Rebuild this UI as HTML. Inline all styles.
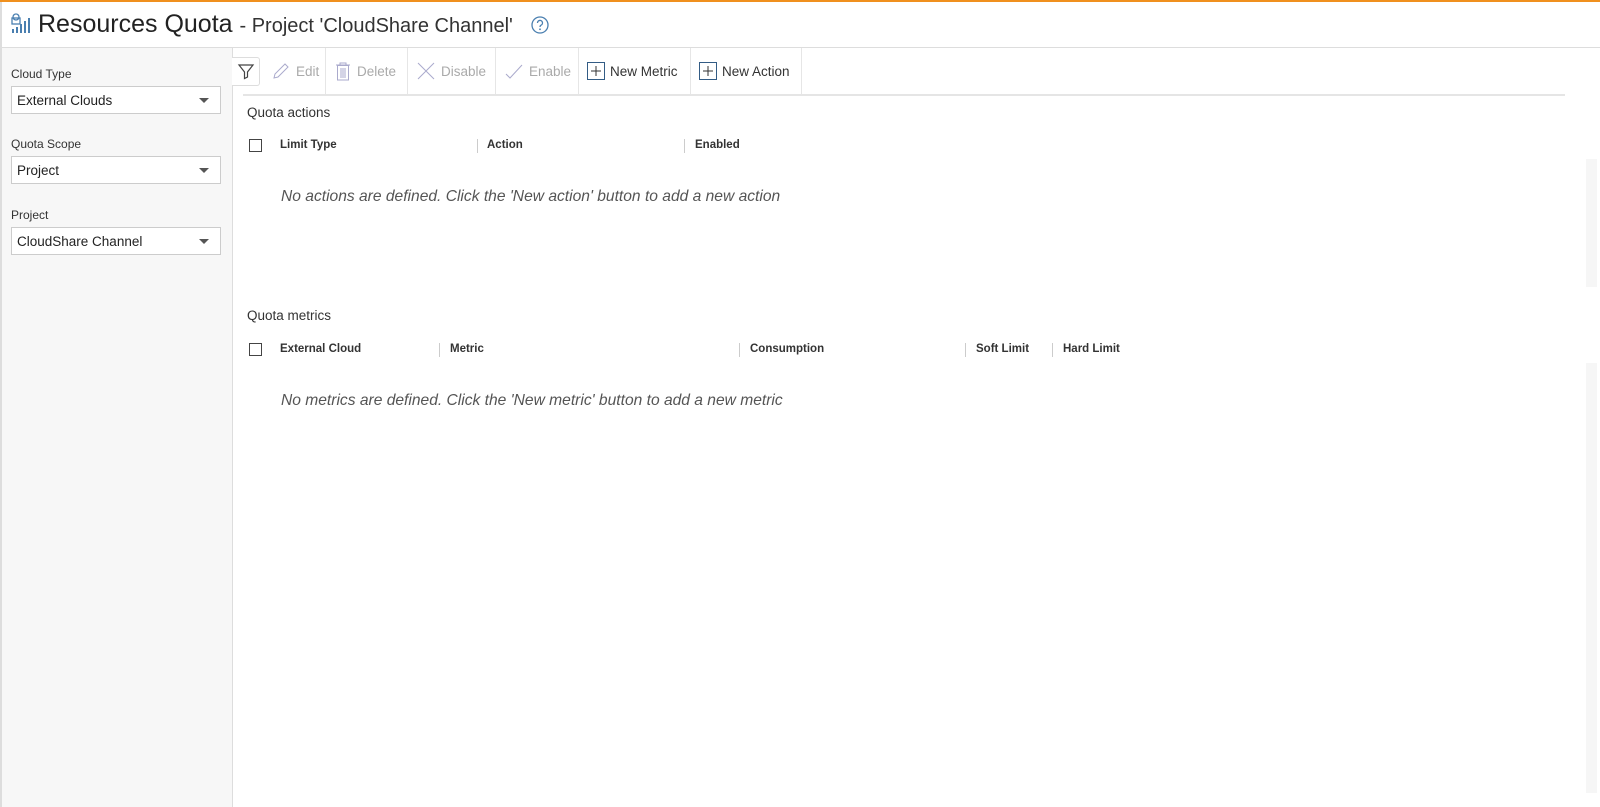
<!DOCTYPE html>
<html><head><meta charset="utf-8"><style>
*{box-sizing:border-box;margin:0;padding:0}
body{width:1600px;height:807px;overflow:hidden;background:#fff;font-family:"Liberation Sans",sans-serif;color:#333;position:relative}
.top{position:absolute;left:0;top:0;width:1600px;height:2px;background:#f0901e}
.lb{position:absolute;left:0;top:2px;width:2px;height:805px;background:#ddd}
h1{position:absolute;left:38px;top:10px;font-weight:normal;font-size:25px;color:#222;white-space:nowrap}
h1 small{font-size:20px;color:#333}
.hdrline{position:absolute;left:0;top:47px;width:1600px;height:1px;background:#ddd}
.side{position:absolute;left:2px;top:48px;width:231px;height:759px;background:#f7f7f7;border-right:1px solid #ddd}
.lbl{position:absolute;left:9px;font-size:12px;color:#333}
.sel{position:absolute;left:9px;width:210px;height:28px;background:#fff;border:1px solid #ccc;font-size:13.5px;padding:6px 5px;color:#222}
.sel:after{content:"";position:absolute;right:11px;top:11px;border-left:5px solid transparent;border-right:5px solid transparent;border-top:5px solid #555}
.tb{position:absolute;top:48px;left:233px;height:46px;font-size:13.5px;color:#aaa;white-space:nowrap}
.btn{position:absolute;top:0;height:46px;display:flex;align-items:center;border-right:1px solid #e6e6e6;padding-left:8px}
.btn svg{margin-right:5px}
.on{color:#333}
.tbline{position:absolute;left:243px;top:94px;width:1322px;height:2px;background:#e5e5e5}
.sec{position:absolute;left:247px;font-size:13.5px;color:#333}
.th{position:absolute;font-size:11.5px;font-weight:bold;color:#333}
.sep{position:absolute;width:1px;height:14px;background:#ccc}
.cb{position:absolute;left:249px;width:13px;height:13px;border:1px solid #444;background:#fff}
.empty{position:absolute;left:281px;font-size:15.6px;font-style:italic;color:#555}
.sb{position:absolute;left:1586px;width:11px;background:#f6f6f6}
</style></head><body>
<div class="top"></div><div class="lb"></div>
<svg style="position:absolute;left:10px;top:13px" width="24" height="22" viewBox="0 0 24 22"><rect x="3" y="1" width="6" height="6" rx="3" fill="none" stroke="#4a7fb0" stroke-width="1.3"/><rect x="2" y="5" width="8" height="6" fill="none" stroke="#4a7fb0" stroke-width="1.3"/><rect x="2" y="16" width="2" height="4" fill="#4a7fb0"/><rect x="6" y="14" width="2" height="6" fill="#4a7fb0"/><rect x="10" y="11" width="2" height="9" fill="#4a7fb0"/><rect x="14" y="8" width="2" height="12" fill="#4a7fb0"/><rect x="18" y="5" width="2" height="15" fill="#4a7fb0"/></svg>
<h1>Resources Quota <small>- Project 'CloudShare Channel'</small></h1>
<svg style="position:absolute;left:531px;top:16px" width="18" height="18" viewBox="0 0 18 18"><circle cx="9" cy="9" r="8" fill="none" stroke="#4a7fb0" stroke-width="1.3"/><path d="M6.5 7a2.5 2.5 0 1 1 3.5 2.2c-.8.4-1 .9-1 1.8" fill="none" stroke="#4a7fb0" stroke-width="1.3"/><circle cx="9" cy="13.3" r=".9" fill="#4a7fb0"/></svg>
<div class="hdrline"></div>
<div class="side">
<div class="lbl" style="top:19px">Cloud Type</div><div class="sel" style="top:38px">External Clouds</div>
<div class="lbl" style="top:89px">Quota Scope</div><div class="sel" style="top:108px">Project</div>
<div class="lbl" style="top:160px">Project</div><div class="sel" style="top:179px">CloudShare Channel</div>
</div>
<div style="position:absolute;left:232px;top:57px;width:28px;height:29px;background:#fff;border:1px solid #ddd;border-left:none;border-radius:0 3px 3px 0"></div>
<svg style="position:absolute;left:237px;top:62px" width="18" height="18" viewBox="0 0 18 18"><path d="M2 3h14l-5.5 7v5l-3 1.5v-6.5z" fill="none" stroke="#444" stroke-width="1.2"/></svg>
<div class="tb">
<div class="btn" style="left:30px;width:63px"><svg width="20" height="20" viewBox="0 0 20 20"><path d="M3 17l1-4L14 3l3 3L7 16z" fill="none" stroke="#aac" stroke-width="1"/></svg>Edit</div>
<div class="btn" style="left:93px;width:82px"><svg width="18" height="20" viewBox="0 0 18 20"><path d="M2 4h14M6 4V2h6v2M3.5 4.5h11V19h-11zM7 7v10M9 7v10M11 7v10" fill="none" stroke="#aac" stroke-width="1"/></svg>Delete</div>
<div class="btn" style="left:175px;width:88px"><svg width="20" height="20" viewBox="0 0 20 20"><path d="M2 2l16 16M18 2L2 18" stroke="#aac" stroke-width="1"/></svg>Disable</div>
<div class="btn" style="left:263px;width:83px"><svg width="20" height="20" viewBox="0 0 20 20"><path d="M2 13l4 4L18 4" fill="none" stroke="#aac" stroke-width="1"/></svg>Enable</div>
<div class="btn on" style="left:346px;width:112px"><svg width="18" height="18" viewBox="0 0 18 18"><rect x=".5" y=".5" width="17" height="17" fill="none" stroke="#335c85"/><path d="M9 4v10M4 9h10" stroke="#333"/></svg>New Metric</div>
<div class="btn on" style="left:458px;width:111px"><svg width="18" height="18" viewBox="0 0 18 18"><rect x=".5" y=".5" width="17" height="17" fill="none" stroke="#335c85"/><path d="M9 4v10M4 9h10" stroke="#333"/></svg>New Action</div>
</div>
<div class="tbline"></div>
<div class="sec" style="top:105px">Quota actions</div>
<div class="cb" style="top:139px"></div>
<div class="th" style="left:280px;top:139px">Limit Type</div><div class="sep" style="left:477px;top:139px"></div>
<div class="th" style="left:487px;top:139px">Action</div><div class="sep" style="left:684px;top:139px"></div>
<div class="th" style="left:695px;top:139px">Enabled</div>
<div class="empty" style="top:188px">No actions are defined. Click the 'New action' button to add a new action</div>
<div class="sb" style="top:159px;height:128px"></div>
<div class="sec" style="top:308px">Quota metrics</div>
<div class="cb" style="top:343px"></div>
<div class="th" style="left:280px;top:343px">External Cloud</div><div class="sep" style="left:439px;top:343px"></div>
<div class="th" style="left:450px;top:343px">Metric</div><div class="sep" style="left:739px;top:343px"></div>
<div class="th" style="left:750px;top:343px">Consumption</div><div class="sep" style="left:965px;top:343px"></div>
<div class="th" style="left:976px;top:343px">Soft Limit</div><div class="sep" style="left:1052px;top:343px"></div>
<div class="th" style="left:1063px;top:343px">Hard Limit</div>
<div class="empty" style="top:392px">No metrics are defined. Click the 'New metric' button to add a new metric</div>
<div class="sb" style="top:363px;height:430px"></div>
</body></html>
